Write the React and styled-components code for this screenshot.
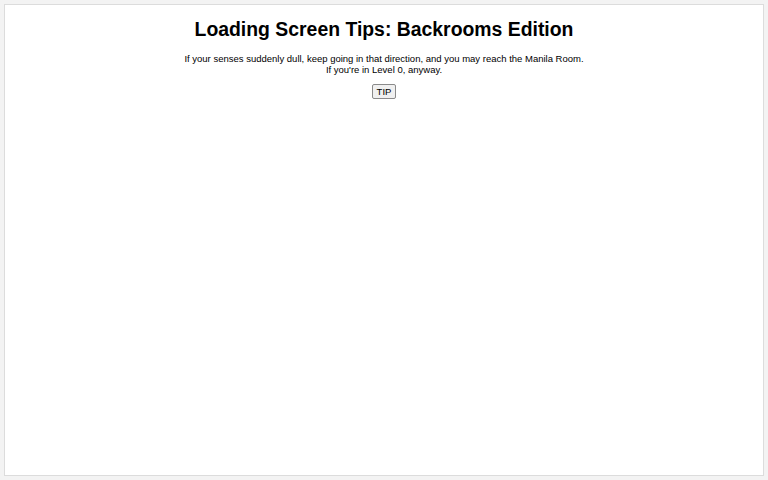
import React from 'react'
import styled, { createGlobalStyle } from 'styled-components'

const GlobalStyle = createGlobalStyle`
  html, body {
    margin: 0;
    padding: 0;
    background: #f3f3f3;
    font-family: "Liberation Sans", Arial, sans-serif;
  }
  body {
    padding: 4px;
  }
`

const Panel = styled.div`
  box-sizing: border-box;
  height: 472px;
  background: #fff;
  border: 1px solid #dcdcdc;
  display: flex;
  flex-direction: column;
  align-items: center;
  padding-top: 13px;
`

const Title = styled.h1`
  margin: 0;
  font-size: 19.4px;
  font-weight: bold;
  color: #000;
`

const Tip = styled.p`
  margin: 12px 0 0;
  font-size: 9.5px;
  line-height: 11px;
  text-align: center;
  color: #000;
`

const TipButton = styled.button`
  margin-top: 9px;
  font-family: "Liberation Sans", Arial, sans-serif;
  font-size: 9.5px;
  font-weight: normal;
  padding: 1px 4px;
  background: #f0f0f0;
  border: 1px solid #8a8a8a;
  border-radius: 2px;
  color: #000;
`

const App = () => (
  <>
    <GlobalStyle />
    <Panel>
      <Title>Loading Screen Tips: Backrooms Edition</Title>
      <Tip>
        If your senses suddenly dull, keep going in that direction, and you may reach the Manila Room.
        <br />
        If you're in Level 0, anyway.
      </Tip>
      <TipButton>TIP</TipButton>
    </Panel>
  </>
)

export default App
